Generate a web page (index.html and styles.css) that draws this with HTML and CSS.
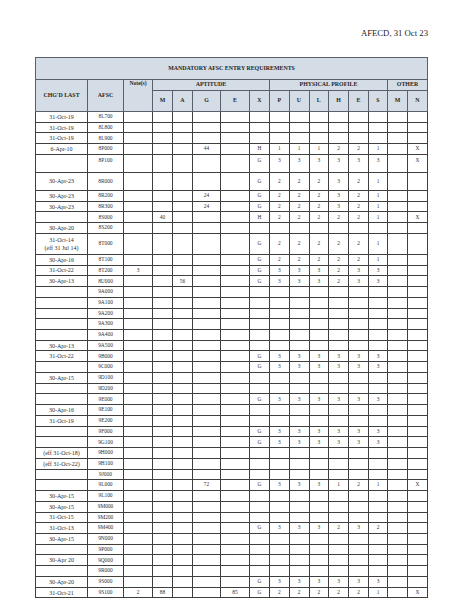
FILE: index.html
```html
<!DOCTYPE html>
<html>
<head>
<meta charset="utf-8">
<title>AFECD Mandatory AFSC Entry Requirements</title>
<link rel="stylesheet" href="styles.css">
</head>
<body>
<div class="page">
  <div class="doc-id">AFECD, 31 Oct 23</div>
  <table class="req">
    <colgroup>
      <col class="w-date"><col class="w-afsc"><col class="w-note">
      <col class="w20"><col class="w20"><col class="w28"><col class="w29"><col class="w20">
      <col class="w195"><col class="w20"><col class="w195"><col class="w20"><col class="w20"><col class="w19">
      <col class="w20"><col class="w20">
    </colgroup>
    <thead>
      <tr class="h-title"><th colspan="16">MANDATORY AFSC ENTRY REQUIREMENTS</th></tr>
      <tr class="h-group"><th rowspan="2">CHG'D LAST</th><th rowspan="2">AFSC</th><th rowspan="2" class="notes">Note(s)</th><th colspan="5">APTITUDE</th><th colspan="6">PHYSICAL PROFILE</th><th colspan="2">OTHER</th></tr>
      <tr class="h-sub"><th>M</th><th>A</th><th>G</th><th>E</th><th>X</th><th>P</th><th>U</th><th>L</th><th>H</th><th>E</th><th>S</th><th>M</th><th>N</th></tr>
    </thead>
    <tbody>
      <tr class="r"><td class="d">31-Oct-19</td><td class="c">8L700</td><td></td><td></td><td></td><td></td><td></td><td></td><td></td><td></td><td></td><td></td><td></td><td></td><td></td><td></td></tr>
      <tr class="r"><td class="d">31-Oct-19</td><td class="c">8L800</td><td></td><td></td><td></td><td></td><td></td><td></td><td></td><td></td><td></td><td></td><td></td><td></td><td></td><td></td></tr>
      <tr class="r"><td class="d">31-Oct-19</td><td class="c">8L900</td><td></td><td></td><td></td><td></td><td></td><td></td><td></td><td></td><td></td><td></td><td></td><td></td><td></td><td></td></tr>
      <tr class="r"><td class="d">6-Apr-10</td><td class="c">8P000</td><td></td><td></td><td></td><td>44</td><td></td><td>H</td><td>1</td><td>1</td><td>1</td><td>2</td><td>2</td><td>1</td><td></td><td>X</td></tr>
      <tr class="tall top tk"><td class="d"></td><td class="c">8P100</td><td></td><td></td><td></td><td></td><td></td><td>G</td><td>3</td><td>3</td><td>3</td><td>3</td><td>3</td><td>3</td><td></td><td>X</td></tr>
      <tr class="tall"><td class="d">30-Apr-23</td><td class="c">8R000</td><td></td><td></td><td></td><td></td><td></td><td>G</td><td>2</td><td>2</td><td>2</td><td>3</td><td>2</td><td>1</td><td></td><td></td></tr>
      <tr class="r"><td class="d">30-Apr-23</td><td class="c">8R200</td><td></td><td></td><td></td><td>24</td><td></td><td>G</td><td>2</td><td>2</td><td>2</td><td>3</td><td>2</td><td>1</td><td></td><td></td></tr>
      <tr class="r tk"><td class="d">30-Apr-23</td><td class="c">8R300</td><td></td><td></td><td></td><td>24</td><td></td><td>G</td><td>2</td><td>2</td><td>2</td><td>3</td><td>2</td><td>1</td><td></td><td></td></tr>
      <tr class="r"><td class="d"></td><td class="c">8S000</td><td></td><td>40</td><td></td><td></td><td></td><td>H</td><td>2</td><td>2</td><td>2</td><td>2</td><td>2</td><td>1</td><td></td><td>X</td></tr>
      <tr class="r"><td class="d">30-Apr-20</td><td class="c">8S200</td><td></td><td></td><td></td><td></td><td></td><td></td><td></td><td></td><td></td><td></td><td></td><td></td><td></td><td></td></tr>
      <tr class="tall2"><td class="d">31-Oct-14<br>(eff 31 Jul 14)</td><td class="c">8T000</td><td></td><td></td><td></td><td></td><td></td><td>G</td><td>2</td><td>2</td><td>2</td><td>2</td><td>2</td><td>1</td><td></td><td></td></tr>
      <tr class="r"><td class="d">30-Apr-16</td><td class="c">8T100</td><td></td><td></td><td></td><td></td><td></td><td>G</td><td>2</td><td>2</td><td>2</td><td>2</td><td>2</td><td>1</td><td></td><td></td></tr>
      <tr class="r"><td class="d">31-Oct-22</td><td class="c">8T200</td><td>3</td><td></td><td></td><td></td><td></td><td>G</td><td>3</td><td>3</td><td>3</td><td>2</td><td>3</td><td>3</td><td></td><td></td></tr>
      <tr class="r"><td class="d">30-Apr-13</td><td class="c">8U000</td><td></td><td></td><td>56</td><td></td><td></td><td>G</td><td>3</td><td>3</td><td>3</td><td>2</td><td>3</td><td>3</td><td></td><td></td></tr>
      <tr class="r"><td class="d"></td><td class="c">9A000</td><td></td><td></td><td></td><td></td><td></td><td></td><td></td><td></td><td></td><td></td><td></td><td></td><td></td><td></td></tr>
      <tr class="r"><td class="d"></td><td class="c">9A100</td><td></td><td></td><td></td><td></td><td></td><td></td><td></td><td></td><td></td><td></td><td></td><td></td><td></td><td></td></tr>
      <tr class="r"><td class="d"></td><td class="c">9A200</td><td></td><td></td><td></td><td></td><td></td><td></td><td></td><td></td><td></td><td></td><td></td><td></td><td></td><td></td></tr>
      <tr class="r"><td class="d"></td><td class="c">9A300</td><td></td><td></td><td></td><td></td><td></td><td></td><td></td><td></td><td></td><td></td><td></td><td></td><td></td><td></td></tr>
      <tr class="r"><td class="d"></td><td class="c">9A400</td><td></td><td></td><td></td><td></td><td></td><td></td><td></td><td></td><td></td><td></td><td></td><td></td><td></td><td></td></tr>
      <tr class="r"><td class="d">30-Apr-13</td><td class="c">9A500</td><td></td><td></td><td></td><td></td><td></td><td></td><td></td><td></td><td></td><td></td><td></td><td></td><td></td><td></td></tr>
      <tr class="r"><td class="d">31-Oct-22</td><td class="c">9B000</td><td></td><td></td><td></td><td></td><td></td><td>G</td><td>3</td><td>3</td><td>3</td><td>3</td><td>3</td><td>3</td><td></td><td></td></tr>
      <tr class="r"><td class="d"></td><td class="c">9C000</td><td></td><td></td><td></td><td></td><td></td><td>G</td><td>3</td><td>3</td><td>3</td><td>3</td><td>3</td><td>3</td><td></td><td></td></tr>
      <tr class="r"><td class="d">30-Apr-15</td><td class="c">9D100</td><td></td><td></td><td></td><td></td><td></td><td></td><td></td><td></td><td></td><td></td><td></td><td></td><td></td><td></td></tr>
      <tr class="r"><td class="d"></td><td class="c">9D200</td><td></td><td></td><td></td><td></td><td></td><td></td><td></td><td></td><td></td><td></td><td></td><td></td><td></td><td></td></tr>
      <tr class="r tk"><td class="d"></td><td class="c">9E000</td><td></td><td></td><td></td><td></td><td></td><td>G</td><td>3</td><td>3</td><td>3</td><td>3</td><td>3</td><td>3</td><td></td><td></td></tr>
      <tr class="r"><td class="d">30-Apr-16</td><td class="c">9E100</td><td></td><td></td><td></td><td></td><td></td><td></td><td></td><td></td><td></td><td></td><td></td><td></td><td></td><td></td></tr>
      <tr class="r"><td class="d">31-Oct-19</td><td class="c">9E200</td><td></td><td></td><td></td><td></td><td></td><td></td><td></td><td></td><td></td><td></td><td></td><td></td><td></td><td></td></tr>
      <tr class="r"><td class="d"></td><td class="c">9F000</td><td></td><td></td><td></td><td></td><td></td><td>G</td><td>3</td><td>3</td><td>3</td><td>3</td><td>3</td><td>3</td><td></td><td></td></tr>
      <tr class="r"><td class="d"></td><td class="c">9G100</td><td></td><td></td><td></td><td></td><td></td><td>G</td><td>3</td><td>3</td><td>3</td><td>3</td><td>3</td><td>3</td><td></td><td></td></tr>
      <tr class="r"><td class="d">(eff 31-Oct-18)</td><td class="c">9H000</td><td></td><td></td><td></td><td></td><td></td><td></td><td></td><td></td><td></td><td></td><td></td><td></td><td></td><td></td></tr>
      <tr class="r"><td class="d">(eff 31-Oct-22)</td><td class="c">9H100</td><td></td><td></td><td></td><td></td><td></td><td></td><td></td><td></td><td></td><td></td><td></td><td></td><td></td><td></td></tr>
      <tr class="r"><td class="d"></td><td class="c">9J000</td><td></td><td></td><td></td><td></td><td></td><td></td><td></td><td></td><td></td><td></td><td></td><td></td><td></td><td></td></tr>
      <tr class="r tk"><td class="d"></td><td class="c">9L000</td><td></td><td></td><td></td><td>72</td><td></td><td>G</td><td>3</td><td>3</td><td>3</td><td>1</td><td>2</td><td>1</td><td></td><td>X</td></tr>
      <tr class="r"><td class="d">30-Apr-15</td><td class="c">9L100</td><td></td><td></td><td></td><td></td><td></td><td></td><td></td><td></td><td></td><td></td><td></td><td></td><td></td><td></td></tr>
      <tr class="r"><td class="d">30-Apr-15</td><td class="c">9M000</td><td></td><td></td><td></td><td></td><td></td><td></td><td></td><td></td><td></td><td></td><td></td><td></td><td></td><td></td></tr>
      <tr class="r"><td class="d">31-Oct-15</td><td class="c">9M200</td><td></td><td></td><td></td><td></td><td></td><td></td><td></td><td></td><td></td><td></td><td></td><td></td><td></td><td></td></tr>
      <tr class="r"><td class="d">31-Oct-13</td><td class="c">9M400</td><td></td><td></td><td></td><td></td><td></td><td>G</td><td>3</td><td>3</td><td>3</td><td>2</td><td>3</td><td>2</td><td></td><td></td></tr>
      <tr class="r"><td class="d">30-Apr-15</td><td class="c">9N000</td><td></td><td></td><td></td><td></td><td></td><td></td><td></td><td></td><td></td><td></td><td></td><td></td><td></td><td></td></tr>
      <tr class="r"><td class="d"></td><td class="c">9P000</td><td></td><td></td><td></td><td></td><td></td><td></td><td></td><td></td><td></td><td></td><td></td><td></td><td></td><td></td></tr>
      <tr class="r tk"><td class="d">30-Apr 20</td><td class="c">9Q000</td><td></td><td></td><td></td><td></td><td></td><td></td><td></td><td></td><td></td><td></td><td></td><td></td><td></td><td></td></tr>
      <tr class="r"><td class="d"></td><td class="c">9R000</td><td></td><td></td><td></td><td></td><td></td><td></td><td></td><td></td><td></td><td></td><td></td><td></td><td></td><td></td></tr>
      <tr class="r"><td class="d">30-Apr-20</td><td class="c">9S000</td><td></td><td></td><td></td><td></td><td></td><td>G</td><td>3</td><td>3</td><td>3</td><td>3</td><td>3</td><td>3</td><td></td><td></td></tr>
      <tr class="r tk"><td class="d">31-Oct-21</td><td class="c">9S100</td><td>2</td><td>88</td><td></td><td></td><td>85</td><td>G</td><td>2</td><td>2</td><td>2</td><td>2</td><td>2</td><td>1</td><td></td><td>X</td></tr>
    </tbody>
  </table>
</div>
</body>
</html>
```

FILE: styles.css
```css
html, body {
  margin: 0;
  padding: 0;
  background: #ffffff;
}

body {
  font-family: "Liberation Serif", "Times New Roman", serif;
  color: #2e2e2e;
}

.page {
  width: 393px;
  padding: 28px 0 0 35px;
}

.doc-id {
  text-align: right;
  font-size: 8.7px;
  line-height: 10px;
  height: 10px;
  margin-bottom: 19px;
  color: #222;
}

.req {
  border-collapse: collapse;
  table-layout: fixed;
  width: 392px;
  border: 1px solid #7d7d7d;
}

.w-date { width: 52px; }
.w-afsc { width: 36px; }
.w-note { width: 29px; }
.w20 { width: 20px; }
.w28 { width: 28px; }
.w29 { width: 29px; }
.w195 { width: 19.5px; }
.w19 { width: 19px; }

.req th,
.req td {
  padding: 0;
  text-align: center;
  vertical-align: middle;
  line-height: 1;
  white-space: nowrap;
  overflow: hidden;
}

.req th {
  background: #d4dde6;
  border: 1px solid #58616b;
  font-weight: bold;
  font-size: 5.9px;
  color: #262626;
}

.h-title { height: 22px; }
.h-group { height: 11px; }
.h-sub { height: 21px; }

.req th.notes {
  vertical-align: top;
  padding-top: 1px;
  font-size: 5.6px;
}

.req td {
  border: 1px solid #3f3f3f;
  font-size: 5.4px;
  color: #2f2f2f;
}

.req td.d {
  font-size: 6px;
  line-height: 8px;
}

.req td.c {
  font-size: 5.4px;
}

.r { height: 10.74px; }
.tall { height: 18px; }
.tall2 { height: 21px; }

.top td {
  vertical-align: top;
  padding-top: 3px;
}

.tk td {
  border-top: 1.5px solid #2a2a2a;
}
```
